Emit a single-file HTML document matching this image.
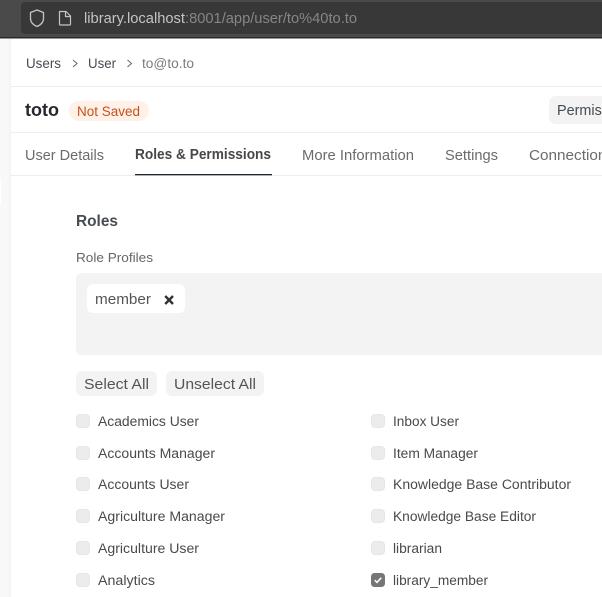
<!DOCTYPE html>
<html lang="en">
<head>
<meta charset="utf-8">
<title>toto</title>
<style>
html,body{margin:0;padding:0;background:#fff;width:602px;height:597px;overflow:hidden}
svg{display:block;font-family:"Liberation Sans",sans-serif}
text{white-space:pre}
</style>
</head>
<body>
<svg width="602" height="597" viewBox="0 0 602 597" xmlns="http://www.w3.org/2000/svg">
<rect width="602" height="597" fill="#fff"/>
<!-- browser bar -->
<rect width="602" height="38" fill="#4a4a4a"/>
<rect y="37" width="602" height="1.5" fill="#2a2a2a"/>
<rect x="21" y="2" width="600" height="32" rx="4" fill="#383838"/>
<path d="M37 12.5 L43.5 15 V21 C43.5 25 40.5 27.5 37 29 C33.5 27.5 30.5 25 30.5 21 V15 Z" transform="translate(0,-2.5)" fill="none" stroke="#c4c4c4" stroke-width="1.3" stroke-linejoin="round"/>
<path d="M59.5 13 H66 L70.5 17.5 V25.5 Q70.5 26.5 69.5 26.5 H60.500 Q59.5 26.5 59.5 25.5 Z M65.5 13 V18 H70.5" transform="translate(0,-1.5)" fill="none" stroke="#c4c4c4" stroke-width="1.2" stroke-linejoin="round"/>
<text x="84" y="23" font-size="14.5" fill="#c4c4c4" textLength="101" lengthAdjust="spacingAndGlyphs">library.localhost</text>
<text x="185" y="23" font-size="14.5" fill="#868686" textLength="172" lengthAdjust="spacingAndGlyphs">:8001/app/user/to%40to.to</text>

<!-- left strip -->
<rect x="0" y="39" width="9.5" height="558" fill="#f8f8f8"/>
<rect x="9.5" y="39" width="1" height="558" fill="#ebebeb"/>
<rect x="0" y="178" width="1" height="27" fill="#fff"/>

<!-- breadcrumb -->
<text x="26" y="68" font-size="13.5" fill="#444b52" textLength="35" lengthAdjust="spacingAndGlyphs">Users</text>
<path d="M73 60 L77 63.5 L73 67" fill="none" stroke="#666" stroke-width="1"/>
<text x="88" y="68" font-size="13.5" fill="#444b52" textLength="28" lengthAdjust="spacingAndGlyphs">User</text>
<path d="M127.500 60 L131.500 63.500 L127.500 67" fill="none" stroke="#666" stroke-width="1"/>
<text x="142" y="68" font-size="13.5" fill="#7c7c7c" textLength="52" lengthAdjust="spacingAndGlyphs">to@to.to</text>
<rect x="10.500" y="86" width="592" height="1" fill="#ededed"/>

<!-- title -->
<text x="25" y="116" font-size="18.5" font-weight="700" fill="#25292e" textLength="34" lengthAdjust="spacingAndGlyphs">toto</text>
<rect x="69" y="101" width="80" height="20" rx="10" fill="#fff1e7"/>
<text x="77" y="116" font-size="13.5" fill="#c4501b" textLength="63" lengthAdjust="spacingAndGlyphs">Not Saved</text>
<rect x="549" y="96" width="80" height="28" rx="7" fill="#f3f3f3"/>
<text x="557" y="115" font-size="14.5" fill="#444b52" textLength="52" lengthAdjust="spacingAndGlyphs">Permiss</text>
<rect x="10.500" y="132" width="592" height="1" fill="#ededed"/>

<!-- tabs -->
<text x="25" y="160" font-size="14.5" fill="#6b6b6b" textLength="79" lengthAdjust="spacingAndGlyphs">User Details</text>
<text x="135" y="159" font-size="14.5" font-weight="700" fill="#474747" textLength="136" lengthAdjust="spacingAndGlyphs">Roles &amp; Permissions</text>
<text x="302" y="160" font-size="14.5" fill="#6b6b6b" textLength="112" lengthAdjust="spacingAndGlyphs">More Information</text>
<text x="445" y="160" font-size="14.5" fill="#6b6b6b" textLength="53" lengthAdjust="spacingAndGlyphs">Settings</text>
<text x="529" y="160" font-size="14.5" fill="#6b6b6b" textLength="85" lengthAdjust="spacingAndGlyphs">Connections</text>
<rect x="10.500" y="175" width="592" height="1" fill="#ededed"/>
<rect x="135" y="174" width="137" height="1.300" fill="#1f272e"/>

<!-- roles -->
<text x="76" y="226" font-size="16" font-weight="700" fill="#474c52" textLength="42" lengthAdjust="spacingAndGlyphs">Roles</text>
<text x="76" y="262" font-size="13" fill="#666" textLength="77" lengthAdjust="spacingAndGlyphs">Role Profiles</text>
<rect x="76" y="273" width="560" height="82" rx="6" fill="#f3f3f3"/>
<rect x="87" y="284" width="98" height="29" rx="6" fill="#fff"/>
<text x="95" y="304" font-size="14.5" fill="#555" textLength="56" lengthAdjust="spacingAndGlyphs">member</text>
<path d="M165.200 296 L173 304 M173 296 L165.200 304" stroke="#333" stroke-width="2.400" fill="none"/>

<rect x="76" y="371" width="81" height="25" rx="6" fill="#f3f3f3"/>
<text x="84" y="389" font-size="14.5" fill="#555" textLength="65" lengthAdjust="spacingAndGlyphs">Select All</text>
<rect x="166" y="371" width="98" height="25" rx="6" fill="#f3f3f3"/>
<text x="174" y="389" font-size="14.5" fill="#555" textLength="82" lengthAdjust="spacingAndGlyphs">Unselect All</text>

<!-- checkboxes -->
<g fill="#ececec" stroke="#e6e6e6" stroke-width="1">
<rect x="76.500" y="414.500" width="13" height="13" rx="3.500"/>
<rect x="76.500" y="446.500" width="13" height="13" rx="3.500"/>
<rect x="76.500" y="477.500" width="13" height="13" rx="3.500"/>
<rect x="76.500" y="509.500" width="13" height="13" rx="3.500"/>
<rect x="76.500" y="541.500" width="13" height="13" rx="3.500"/>
<rect x="76.500" y="573.500" width="13" height="13" rx="3.500"/>
<rect x="371.500" y="414.500" width="13" height="13" rx="3.500"/>
<rect x="371.500" y="446.500" width="13" height="13" rx="3.500"/>
<rect x="371.500" y="477.500" width="13" height="13" rx="3.500"/>
<rect x="371.500" y="509.500" width="13" height="13" rx="3.500"/>
<rect x="371.500" y="541.500" width="13" height="13" rx="3.500"/>
</g>
<rect x="371" y="573" width="14" height="14" rx="3.500" fill="#767676"/>
<path d="M374.800 580.200 L377 582.400 L381.200 577.800" fill="none" stroke="#fff" stroke-width="1.600"/>

<g font-size="13.500" fill="#4a4a4a">
<text x="98" y="426" textLength="101" lengthAdjust="spacingAndGlyphs">Academics User</text>
<text x="98" y="458" textLength="117" lengthAdjust="spacingAndGlyphs">Accounts Manager</text>
<text x="98" y="489" textLength="91" lengthAdjust="spacingAndGlyphs">Accounts User</text>
<text x="98" y="521" textLength="127" lengthAdjust="spacingAndGlyphs">Agriculture Manager</text>
<text x="98" y="553" textLength="101" lengthAdjust="spacingAndGlyphs">Agriculture User</text>
<text x="98" y="585" textLength="57" lengthAdjust="spacingAndGlyphs">Analytics</text>
<text x="393" y="426" textLength="66" lengthAdjust="spacingAndGlyphs">Inbox User</text>
<text x="393" y="458" textLength="85" lengthAdjust="spacingAndGlyphs">Item Manager</text>
<text x="393" y="489" textLength="178" lengthAdjust="spacingAndGlyphs">Knowledge Base Contributor</text>
<text x="393" y="521" textLength="143" lengthAdjust="spacingAndGlyphs">Knowledge Base Editor</text>
<text x="393" y="553" textLength="49" lengthAdjust="spacingAndGlyphs">librarian</text>
<text x="393" y="585" textLength="95" lengthAdjust="spacingAndGlyphs">library_member</text>
</g>
</svg>
</body>
</html>
